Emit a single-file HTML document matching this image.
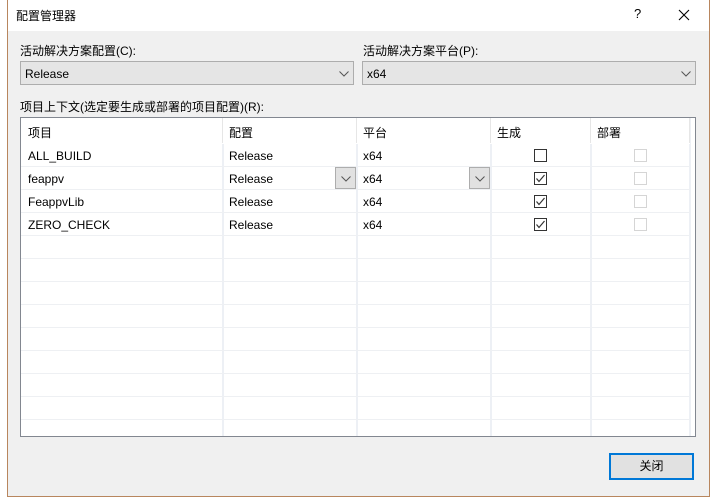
<!DOCTYPE html>
<html><head><meta charset="utf-8"><style>
*{margin:0;padding:0;box-sizing:border-box}
body{width:716px;height:504px;background:#fff;position:relative;overflow:hidden;font-family:"Liberation Sans","Noto Sans CJK SC",sans-serif;font-size:12px;color:#000}
.a{position:absolute}
.win{left:7px;top:-1px;width:703px;height:498px;border:1px solid #b8865e;background:#f0f0f0}
.title{left:8px;top:0;width:701px;height:31px;background:#fff}
.combo{height:24px;background:#e5e5e5;border:1px solid #adadad}
.combo span{position:absolute;left:4px;top:5px}
.chev{position:absolute}
.grid{left:20px;top:117px;width:676px;height:320px;background:#fff;border:1px solid #828790}
.vl{width:2px;background:#edf0f5;top:118px;height:318px}
.hl{height:1px;background:#eef0f3;left:21px;width:669px}
.cb{width:13px;height:13px;border:1px solid #333;background:#fff}
.cbd{width:13px;height:13px;border:1px solid #d5d5d5;background:#fff}
.dd{width:21px;height:22px;background:#e1e1e1;border:1px solid #adadad}
.t{top:1px}
</style></head><body>
<div class="a win"></div>
<div class="a title"></div>
<div class="a" style="left:16px;top:7px">配置管理器</div>
<div class="a" style="left:634px;top:6px;font-size:13px">?</div>
<svg class="a" style="left:678px;top:9px" width="12" height="12"><path d="M1 1L11 11M11 1L1 11" stroke="#000" stroke-width="1.1"/></svg>
<div class="a" style="left:20px;top:42px">活动解决方案配置(C):</div>
<div class="a" style="left:363px;top:42px">活动解决方案平台(P):</div>
<div class="a combo" style="left:20px;top:61px;width:334px"><span>Release</span><svg class="chev" style="left:318px;top:9px" width="10" height="6"><path d="M0.5 0.5L5 5L9.5 0.5" stroke="#555" fill="none"/></svg></div>
<div class="a combo" style="left:362px;top:61px;width:334px"><span>x64</span><svg class="chev" style="left:318px;top:9px" width="10" height="6"><path d="M0.5 0.5L5 5L9.5 0.5" stroke="#555" fill="none"/></svg></div>
<div class="a" style="left:20px;top:98px">项目上下文(选定要生成或部署的项目配置)(R):</div>
<div class="a grid"></div>
<div class="a vl" style="left:222px"></div>
<div class="a vl" style="left:356px"></div>
<div class="a vl" style="left:490px"></div>
<div class="a vl" style="left:590px"></div>
<div class="a vl" style="left:689px"></div>
<div class="a hl" style="top:166px"></div>
<div class="a hl" style="top:189px"></div>
<div class="a hl" style="top:212px"></div>
<div class="a hl" style="top:235px"></div>
<div class="a hl" style="top:258px"></div>
<div class="a hl" style="top:281px"></div>
<div class="a hl" style="top:304px"></div>
<div class="a hl" style="top:327px"></div>
<div class="a hl" style="top:350px"></div>
<div class="a hl" style="top:373px"></div>
<div class="a hl" style="top:396px"></div>
<div class="a hl" style="top:419px"></div>
<div class="a" style="left:21px;top:118px;width:669px;height:26px;background:#fff"></div>
<div class="a" style="left:222px;top:118px;width:1px;height:25px;background:#e6e6e6"></div>
<div class="a" style="left:356px;top:118px;width:1px;height:25px;background:#e6e6e6"></div>
<div class="a" style="left:490px;top:118px;width:1px;height:25px;background:#e6e6e6"></div>
<div class="a" style="left:590px;top:118px;width:1px;height:25px;background:#e6e6e6"></div>
<div class="a" style="left:689px;top:118px;width:1px;height:25px;background:#e6e6e6"></div>
<div class="a" style="left:28px;top:124px">项目</div>
<div class="a" style="left:229px;top:124px">配置</div>
<div class="a" style="left:363px;top:124px">平台</div>
<div class="a" style="left:497px;top:124px">生成</div>
<div class="a" style="left:597px;top:124px">部署</div>
<div class="a" style="left:28px;top:149px">ALL_BUILD</div>
<div class="a" style="left:28px;top:172px">feappv</div>
<div class="a" style="left:28px;top:195px">FeappvLib</div>
<div class="a" style="left:28px;top:218px">ZERO_CHECK</div>
<div class="a" style="left:229px;top:149px">Release</div>
<div class="a" style="left:229px;top:172px">Release</div>
<div class="a" style="left:229px;top:195px">Release</div>
<div class="a" style="left:229px;top:218px">Release</div>
<div class="a" style="left:363px;top:149px">x64</div>
<div class="a" style="left:363px;top:172px">x64</div>
<div class="a" style="left:363px;top:195px">x64</div>
<div class="a" style="left:363px;top:218px">x64</div>
<div class="a dd" style="left:335px;top:167px"><svg class="chev" style="left:5px;top:8px" width="10" height="6"><path d="M0.5 0.5L5 5L9.5 0.5" stroke="#555" fill="none"/></svg></div>
<div class="a dd" style="left:469px;top:167px"><svg class="chev" style="left:5px;top:8px" width="10" height="6"><path d="M0.5 0.5L5 5L9.5 0.5" stroke="#555" fill="none"/></svg></div>
<div class="a cb" style="left:534px;top:149px"></div>
<div class="a cb" style="left:534px;top:172px"><svg width="11" height="11"><path d="M1.5 5.5L4 8.5L9.5 2" stroke="#333" fill="none" stroke-width="1.2"/></svg></div>
<div class="a cb" style="left:534px;top:195px"><svg width="11" height="11"><path d="M1.5 5.5L4 8.5L9.5 2" stroke="#333" fill="none" stroke-width="1.2"/></svg></div>
<div class="a cb" style="left:534px;top:218px"><svg width="11" height="11"><path d="M1.5 5.5L4 8.5L9.5 2" stroke="#333" fill="none" stroke-width="1.2"/></svg></div>
<div class="a cbd" style="left:634px;top:149px"></div>
<div class="a cbd" style="left:634px;top:172px"></div>
<div class="a cbd" style="left:634px;top:195px"></div>
<div class="a cbd" style="left:634px;top:218px"></div>
<div class="a" style="left:609px;top:453px;width:85px;height:27px;border:2px solid #0078d7;background:#e1e1e1;text-align:center;line-height:23px">关闭</div>
</body></html>
